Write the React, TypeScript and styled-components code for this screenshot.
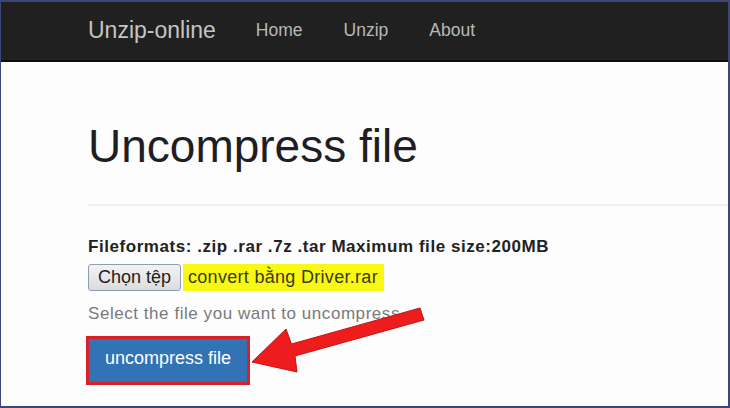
import React from "react";
import styled, { createGlobalStyle } from "styled-components";

const Global = createGlobalStyle`
  html, body { margin: 0; padding: 0; background: #ffffff; }
  body { font-family: "Liberation Sans", Arial, sans-serif; }
  * { box-sizing: border-box; }
`;

const Frame = styled.div`
  position: relative;
  width: 730px;
  height: 408px;
  overflow: hidden;
  background: #fdfdfd;
  border: 2px solid #3b4679;
  border-left-width: 1px;
  display: flex;
  flex-direction: column;
`;

const NavBar = styled.nav`
  height: 60px;
  flex: none;
  background: #202020;
  border-bottom: 2px solid #0c0c0c;
  display: flex;
  align-items: center;
  padding-left: 87px;
  padding-bottom: 2px;
`;

const Brand = styled.a`
  font-size: 23px;
  color: #c4c4c4;
  margin-right: 40px;
  text-decoration: none;
`;

const NavLink = styled.a`
  font-size: 17.5px;
  color: #b8b8b8;
  margin-right: 41px;
  text-decoration: none;
`;

const Main = styled.main`
  padding-left: 87px;
  display: flex;
  flex-direction: column;
  align-items: flex-start;
`;

const Header = styled.div`
  align-self: stretch;
  margin-top: 59px;
  padding-bottom: 32px;
  border-bottom: 2px solid #efefef;
`;

const Title = styled.h1`
  margin: 0;
  font-size: 46px;
  line-height: 1.1;
  font-weight: 400;
  color: #1e1e24;
`;

const Formats = styled.p`
  margin: 31px 0 0;
  font-size: 17px;
  line-height: 20px;
  font-weight: 700;
  color: #222;
  letter-spacing: 0.55px;
`;

const FileRow = styled.div`
  margin-top: 7px;
  display: flex;
  align-items: center;
  gap: 2px;
`;

const ChooseButton = styled.button`
  width: 93px;
  height: 27px;
  padding: 0;
  font-family: "Liberation Sans", Arial, sans-serif;
  font-size: 18px;
  color: #1c1c1c;
  background: linear-gradient(#f3f3f3, #dcdcdc);
  border: 1px solid #8e9cb8;
  border-radius: 3px;
`;

const FileName = styled.span`
  height: 27px;
  display: flex;
  align-items: center;
  padding: 0 6px 0 5px;
  background: #f8f812;
  color: #3a3a18;
  font-size: 18px;
  letter-spacing: 0.3px;
`;

const Help = styled.p`
  margin: 13px 0 0;
  font-size: 17px;
  line-height: 20px;
  color: #7a7a7a;
  letter-spacing: 0.55px;
`;

const Marked = styled.div`
  margin: 12px 0 0 -2px;
  border: 3px solid #d8202a;
  display: flex;
`;

const SubmitButton = styled.button`
  width: 158px;
  height: 43px;
  border: none;
  background: #3273b5;
  color: #ffffff;
  font-family: "Liberation Sans", Arial, sans-serif;
  font-size: 18px;
  padding: 0 0 4px;
`;

const ArrowLayer = styled.svg`
  position: absolute;
  left: 0;
  top: 0;
  pointer-events: none;
`;

export default function App() {
  return (
    <>
      <Global />
      <Frame>
        <NavBar>
          <Brand>Unzip-online</Brand>
          <NavLink>Home</NavLink>
          <NavLink>Unzip</NavLink>
          <NavLink>About</NavLink>
        </NavBar>
        <Main>
          <Header>
            <Title>Uncompress file</Title>
          </Header>
          <Formats>Fileformats: .zip .rar .7z .tar Maximum file size:200MB</Formats>
          <FileRow>
            <ChooseButton>Chọn tệp</ChooseButton>
            <FileName>convert bằng Driver.rar</FileName>
          </FileRow>
          <Help>Select the file you want to uncompress</Help>
          <Marked>
            <SubmitButton>uncompress file</SubmitButton>
          </Marked>
        </Main>
        <ArrowLayer width="730" height="408" viewBox="0 0 730 408">
          <polygon
            points="251,360 285,327 290.5,342 419,306 423,318 294,354 296,370"
            fill="#ee1c1c"
            stroke="#c41414"
            strokeWidth="1"
            strokeLinejoin="round"
          />
        </ArrowLayer>
      </Frame>
    </>
  );
}
